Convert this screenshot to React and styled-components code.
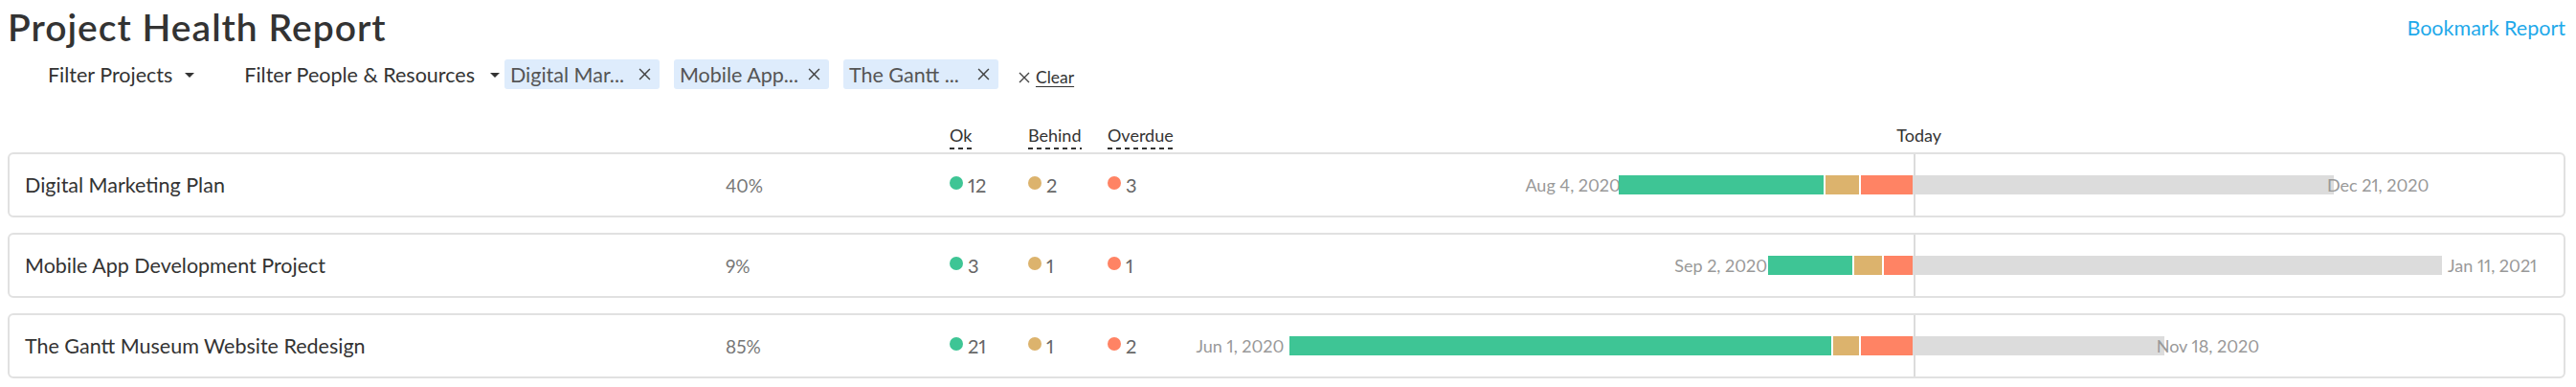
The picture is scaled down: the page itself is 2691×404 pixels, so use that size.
import React from 'react'
import styled, { createGlobalStyle } from 'styled-components'

const GlobalStyle = createGlobalStyle`
  body {
    margin: 0;
    font-family: Lato, "Open Sans", sans-serif;
    font-variant-numeric: proportional-nums;
    color: #333;
    background: #fff;
  }
`

const DAY_PX = 5.374
const ORIGIN = Date.UTC(2020, 4, 12)
const TODAY = Date.UTC(2020, 8, 30)
const COLUMNS = '732px 234px 82px 83px 83px 1fr'

const colors = {
  ok: '#3ec595',
  behind: '#dcb36d',
  overdue: '#ff8364',
  rest: '#dcdcdc',
}

const dayX = (d) => ((d - ORIGIN) / 86400000) * DAY_PX

const projects = [
  { name: 'Digital Marketing Plan', pct: '40%', ok: 12, behind: 2, overdue: 3, start: Date.UTC(2020, 7, 4), end: Date.UTC(2020, 11, 21), startLabel: 'Aug 4, 2020', endLabel: 'Dec 21, 2020' },
  { name: 'Mobile App Development Project', pct: '9%', ok: 3, behind: 1, overdue: 1, start: Date.UTC(2020, 8, 2), end: Date.UTC(2021, 0, 11), startLabel: 'Sep 2, 2020', endLabel: 'Jan 11, 2021' },
  { name: 'The Gantt Museum Website Redesign', pct: '85%', ok: 21, behind: 1, overdue: 2, start: Date.UTC(2020, 5, 1), end: Date.UTC(2020, 10, 18), startLabel: 'Jun 1, 2020', endLabel: 'Nov 18, 2020' },
]

const chips = ['Digital Mar...', 'Mobile App...', 'The Gantt ...']

const Page = styled.div`
  padding: 0 11px 8px 8px;
`

const Header = styled.header`
  display: flex;
  justify-content: space-between;
  align-items: flex-start;
`

const Title = styled.h1`
  margin: 0;
  padding-top: 9px;
  font-size: 39px;
  line-height: 39px;
  font-weight: 600;
  letter-spacing: 1px;
  color: #333;
`

const BookmarkLink = styled.a`
  padding-top: 18px;
  font-size: 21.5px;
  line-height: 22px;
  color: #1fa9ea;
  text-decoration: none;
  cursor: pointer;
`

const FilterBar = styled.div`
  display: flex;
  align-items: center;
  height: 31px;
  margin-top: 14px;
  padding-left: 42px;
`

const FilterButton = styled.div`
  display: flex;
  align-items: center;
  gap: ${(p) => p.$gap}px;
  margin-right: ${(p) => p.$after}px;
  font-size: 21.5px;
  color: #333;
  cursor: pointer;
`

const Caret = styled.span`
  width: 0;
  height: 0;
  border-left: 5px solid transparent;
  border-right: 5px solid transparent;
  border-top: 5px solid #333;
  margin-top: 2px;
`

const ChipList = styled.div`
  display: flex;
  gap: 15px;
`

const Chip = styled.div`
  display: flex;
  align-items: center;
  justify-content: space-between;
  width: 162px;
  height: 31px;
  box-sizing: border-box;
  padding: 0 9px 0 6px;
  background: #deecfc;
  border-radius: 3px;
  font-size: 21.5px;
  color: #555;
  white-space: nowrap;
`

const ClearButton = styled.div`
  display: flex;
  align-items: center;
  gap: 6px;
  margin-left: 21px;
  margin-top: 6px;
  font-size: 17.5px;
  color: #333;
  cursor: pointer;
  span {
    text-decoration: underline;
    text-underline-offset: 3px;
  }
`

const Grid = styled.div`
  display: grid;
  grid-template-columns: ${COLUMNS};
  align-items: center;
  padding-left: 16px;
  border: 2px solid ${(p) => (p.$framed ? '#e1e1e1' : 'transparent')};
  border-radius: 6px;
`

const HeaderRow = styled(Grid)`
  margin-top: 38px;
  margin-bottom: 3px;
  height: 25px;
  border-top: 0;
  border-bottom: 0;
`

const ColumnLabel = styled.span`
  justify-self: start;
  font-size: 18px;
  line-height: 20px;
  padding-bottom: 5px;
  color: #333;
  background: repeating-linear-gradient(to right, #333 0 5px, transparent 5px 9px) left bottom / 100% 2px no-repeat;
`

const TimelineHead = styled.div`
  position: relative;
  height: 25px;
`

const TodayLabel = styled.span`
  position: absolute;
  top: 0;
  transform: translateX(-50%);
  font-size: 18px;
  line-height: 20px;
  color: #333;
`

const Rows = styled.div`
  display: flex;
  flex-direction: column;
  gap: 16px;
`

const Row = styled(Grid)`
  height: 68px;
  box-sizing: border-box;
`

const Name = styled.div`
  font-size: 21.5px;
  color: #333;
`

const Percent = styled.div`
  font-size: 19px;
  color: #777;
`

const Stat = styled.div`
  display: flex;
  align-items: center;
  gap: 5px;
  font-size: 20px;
  color: #666;
`

const Dot = styled.span`
  width: 14px;
  height: 14px;
  border-radius: 50%;
  background: ${(p) => p.$color};
  margin-bottom: 5px;
`

const Timeline = styled.div`
  position: relative;
  align-self: stretch;
`

const TodayLine = styled.div`
  position: absolute;
  top: 0;
  bottom: 0;
  width: 2px;
  background: #dcdcdc;
`

const Bar = styled.div`
  position: absolute;
  top: 50%;
  height: 20px;
  margin-top: -10px;
  display: flex;
  gap: 2px;
`

const Segment = styled.div`
  flex: ${(p) => p.$grow} 1 0;
  background: ${(p) => p.$color};
`

// start labels hang left of the bar, end labels are anchored by their right edge
const DateLabel = styled.span`
  position: absolute;
  top: 50%;
  transform: translate(${(p) => (p.$anchor === 'end' ? '-100%' : '0')}, -50%);
  font-size: 18px;
  color: #999;
  white-space: nowrap;
`

const Cross = ({ size = 13 }) => (
  <svg width={size} height={size} viewBox="0 0 12 12" fill="none" stroke="#444" strokeWidth="1.4">
    <path d="M1 1l10 10M11 1L1 11" />
  </svg>
)

function ProjectRow({ p }) {
  const startX = dayX(p.start)
  const todayX = dayX(TODAY)
  const endX = dayX(p.end)
  return (
    <Row $framed>
      <Name>{p.name}</Name>
      <Percent>{p.pct}</Percent>
      <Stat><Dot $color={colors.ok} />{p.ok}</Stat>
      <Stat><Dot $color={colors.behind} />{p.behind}</Stat>
      <Stat><Dot $color={colors.overdue} />{p.overdue}</Stat>
      <Timeline>
        <DateLabel style={{ left: startX - 98 }}>{p.startLabel}</DateLabel>
        <Bar style={{ left: startX, width: todayX - startX }}>
          <Segment $grow={p.ok} $color={colors.ok} />
          <Segment $grow={p.behind} $color={colors.behind} />
          <Segment $grow={p.overdue} $color={colors.overdue} />
        </Bar>
        <Bar style={{ left: todayX, width: endX - todayX }}>
          <Segment $grow={1} $color={colors.rest} />
        </Bar>
        <TodayLine style={{ left: todayX + 1 }} />
        <DateLabel $anchor="end" style={{ left: endX + 99 }}>{p.endLabel}</DateLabel>
      </Timeline>
    </Row>
  )
}

export default function App() {
  return (
    <Page>
      <GlobalStyle />
      <Header>
        <Title>Project Health Report</Title>
        <BookmarkLink>Bookmark Report</BookmarkLink>
      </Header>
      <FilterBar>
        <FilterButton $gap={13} $after={52}>Filter Projects <Caret /></FilterButton>
        <FilterButton $gap={16} $after={5}>Filter People &amp; Resources <Caret /></FilterButton>
        <ChipList>
          {chips.map((c) => (
            <Chip key={c}>{c}<Cross /></Chip>
          ))}
        </ChipList>
        <ClearButton><Cross size={12} /><span>Clear</span></ClearButton>
      </FilterBar>
      <HeaderRow>
        <span />
        <span />
        <ColumnLabel>Ok</ColumnLabel>
        <ColumnLabel>Behind</ColumnLabel>
        <ColumnLabel>Overdue</ColumnLabel>
        <TimelineHead>
          <TodayLabel style={{ left: dayX(TODAY) + 7 }}>Today</TodayLabel>
        </TimelineHead>
      </HeaderRow>
      <Rows>
        {projects.map((p) => <ProjectRow key={p.name} p={p} />)}
      </Rows>
    </Page>
  )
}
